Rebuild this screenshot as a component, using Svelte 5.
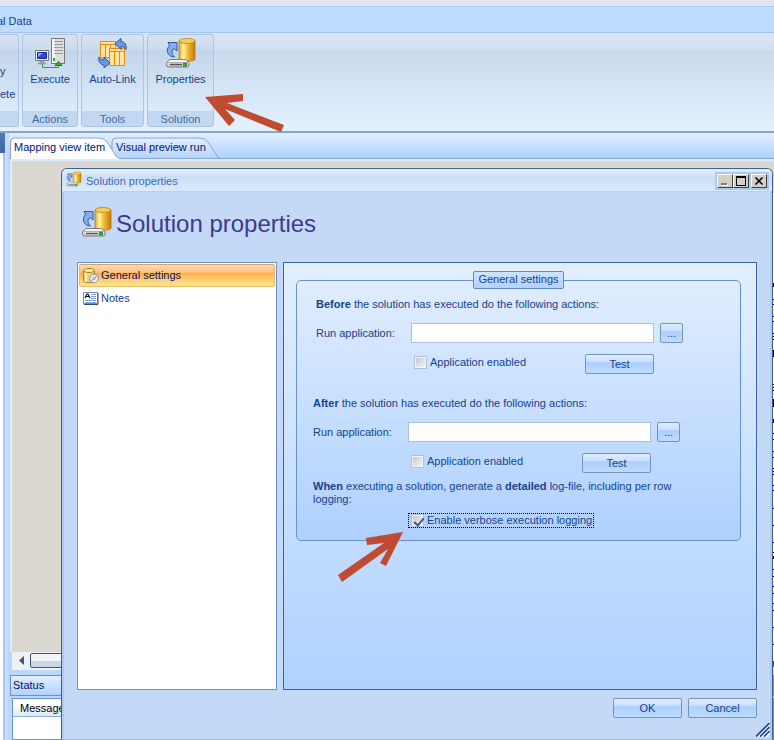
<script>
  const groups = [
    { id: 'before', word: 'Before', gutter: 19 },
    { id: 'after', word: 'After', gutter: 16 }
  ];
  // right-hand text column peeking out from behind the dialog: [y, height]
  const ticks = [
    [122, 4], [138, 1], [143, 1], [155, 1], [160, 1], [172, 1], [175, 1], [178, 1], [189, 7],
    [223, 1], [226, 1], [229, 1], [238, 8], [258, 4], [272, 1], [278, 1], [290, 1], [296, 1],
    [307, 1], [310, 1], [313, 1], [324, 1], [329, 1], [347, 1], [364, 1], [381, 1], [391, 1],
    [395, 3], [408, 1], [415, 1], [425, 1], [432, 1], [442, 1], [449, 1], [466, 1], [483, 1]
  ];
  let values = $state({ before: '', after: '' });
  let enabled = $state({ before: false, after: false });
  let verbose = $state(true);
</script>

{#snippet database(size)}
  <svg class="icon" width={size} height={size} viewBox="0 0 32 32" aria-hidden="true">
    <defs>
      <linearGradient id="gold"><stop offset="0" stop-color="#dca526" /><stop offset=".28" stop-color="#fff3ae" /><stop offset=".55" stop-color="#f2bc35" /><stop offset="1" stop-color="#c47a05" /></linearGradient>
      <linearGradient id="drive" x2="0" y2="1"><stop offset="0" stop-color="#fff" /><stop offset="1" stop-color="#c4c4c4" /></linearGradient>
    </defs>
    <path d="M14 4v18c0 3 16 3 16 0V4z" fill="url(#gold)" stroke="#b57912" stroke-width=".8" />
    <ellipse cx="22" cy="4" rx="8" ry="2.500" fill="#f4cd58" stroke="#b98318" stroke-width=".8" />
    <path d="M5 22.500l-3.500 3v2.500q0 2 2 2h18.500q2 0 2-2v-2.500l-3.500-3z" fill="url(#drive)" stroke="#7d7d7d" />
    <path d="M2 25.500h21" stroke="#b5b5b5" />
    <path d="M5 27.500h12" stroke="#555" stroke-width="1.300" />
    <path d="M18.500 26h3v3h-3z" fill="#25b825" stroke="#17681a" stroke-width=".6" />
    <path d="M9.500 20C3 20 0 13 4.500 8.500L3 5.500h9v8.500l-3-2.500C6 13 6.500 17 9.500 20z" fill="#86aeec" stroke="#2a57ab" stroke-width="1" />
  </svg>
{/snippet}

<div class="app">
  <div class="caption"></div>
  <nav class="menubar"><a href="#data">al Data</a></nav>

  <div class="ribbon">
    <section class="group cut">
      <div class="items"><button class="small">y</button><button class="small">ete</button></div>
      <footer></footer>
    </section>
    <section class="group actions">
      <button class="tool">
        <svg class="icon" width="32" height="32" viewBox="0 0 32 32" aria-hidden="true">
          <path d="M17.500 1.500h13v25h-13z" fill="#dedede" stroke="#777" />
          <path d="M18 2h3v24h-3z" fill="#f8f8f8" />
          <path d="M20 4.500h9M20 7.500h9M20 10.500h9M20 13.500h9M20 16.500h9" stroke="#999" />
          <path d="M19 21h2v3h-2z" fill="#27b327" />
          <path d="M1.500 13.500h13v10h-13z" fill="#f2f2f2" stroke="#777" />
          <path d="M3.500 15.500h9v6h-9z" fill="#2d43e8" stroke="#1524a0" />
          <path d="M4 16h5l-5 4z" fill="#8ba2ff" />
          <path d="M6 24h4v2H6zM4 26h8v1H4z" fill="#b0b0b0" stroke="#888" stroke-width=".5" />
          <path d="M8.500 27v3.500h16v-3" fill="none" stroke="#3f963a" />
          <path d="M21 28.500l3.500-4 3.500 4z" fill="#42aa36" stroke="#28751f" />
        </svg>
        <span>Execute</span>
      </button>
      <footer>Actions</footer>
    </section>
    <section class="group tools">
      <button class="tool">
        <svg class="icon" width="32" height="32" viewBox="0 0 32 32" aria-hidden="true">
          <path d="M3.500 4.500h15v16h-15z" fill="#ffe5a0" stroke="#e48b12" />
          <path d="M4 7.500h14M8.500 8v12M13.500 8v12" stroke="#e48b12" />
          <path d="M12.500 11.500h15v17h-15z" fill="#ffe5a0" stroke="#e48b12" />
          <path d="M13 14.500h14M17.500 15v13M22.500 15v13" stroke="#e48b12" />
          <path d="M18 6.500L24 1.500v3c4 0 6 4 5 8-1-2-3-3-5-3v3z" fill="#6e98dd" stroke="#2b57a6" />
          <path d="M13 26l-6 5v-3c-4 0-6-4-5-8 1 2 3 3 5 3v-3z" fill="#6e98dd" stroke="#2b57a6" />
        </svg>
        <span>Auto-Link</span>
      </button>
      <footer>Tools</footer>
    </section>
    <section class="group solution">
      <button class="tool">{@render database(32)}<span>Properties</span></button>
      <footer>Solution</footer>
    </section>
  </div>

  <div class="workspace">
    <aside class="side"><div class="side-head"></div></aside>
    <main class="pane">
      <div class="tabs">
        <svg class="tab-shape" width="220" height="26" viewBox="0 0 220 26" aria-hidden="true">
          <defs><linearGradient id="tab" x2="0" y2="1"><stop offset="0" stop-color="#e4efff" /><stop offset="1" stop-color="#b6d4fd" /></linearGradient></defs>
          <path d="M102 25V9q0-4 4-4h84q5 0 8 4l9 14q1 2 3 2" fill="url(#tab)" stroke="#8aa5d2" />
          <path d="M1 26V9q0-4 4-4h84q5 0 8 4l9 14q1 2 3 2v1z" fill="#fff" />
          <path d="M.5 25V9q0-4 4-4H89q5 0 8 4l9 14q1 2 3 2" fill="none" stroke="#8aa5d2" />
        </svg>
        <button class="tab first">Mapping view item</button>
        <button class="tab">Visual preview run</button>
      </div>
      <div class="canvas">
        <svg class="behind" width="2" height="500" viewBox="0 0 2 500" aria-hidden="true">
          <path d="M0 32h2v468H0z" fill="#fff" />
          {#each ticks as [y, h]}<rect x="0" y={y} width="2" height={h} fill="#000" />{/each}
        </svg>
      </div>
      <div class="scroll">
        <svg width="18" height="17" viewBox="0 0 18 17" aria-hidden="true"><path d="M12 4v9L7 8.500z" fill="#3f557f" /></svg>
        <div class="thumb"></div>
      </div>
      <div class="status">Status</div>
      <div class="messages"><div class="column">Message</div></div>
    </main>
  </div>

  <div class="dialog" role="dialog" aria-labelledby="dialog-title">
    <header class="titlebar">
      {@render database(16)}
      <span class="name">Solution properties</span>
      <div class="controls">
        <button aria-label="Minimize"><svg width="10" height="10" viewBox="0 0 10 10"><path d="M2 8h6v2H2z" fill="#fff" /><path d="M1 7h6v2H1z" fill="#808080" /></svg></button>
        <button aria-label="Maximize"><svg width="10" height="10" viewBox="0 0 10 10"><path d="M0 0h10v10H0zM1 2v7h8V2z" fill="#000" fill-rule="evenodd" /></svg></button>
        <button class="close" aria-label="Close"><svg width="10" height="10" viewBox="0 0 10 10"><path d="M1.500 1.500l7 7M8.500 1.500l-7 7" stroke="#000" stroke-width="1.600" /></svg></button>
      </div>
    </header>

    <div class="heading">{@render database(32)}<h1 id="dialog-title">Solution properties</h1></div>

    <div class="panes">
      <div class="list">
        <button class="entry selected">
          <svg class="icon" width="16" height="16" viewBox="0 0 16 16" aria-hidden="true">
            <path d="M.5 2.500v10c0 3 11 3 11 0v-10z" fill="#f3d370" stroke="#a88126" />
            <path d="M3 4v10" stroke="#fff4b8" stroke-width="2" />
            <ellipse cx="6" cy="2.500" rx="5.500" ry="2" fill="#ffeaa0" stroke="#a88126" />
            <circle cx="11" cy="10.500" r="4.300" fill="#eef1f5" stroke="#8a8f99" />
            <path d="M11 10.500l3-3M11 10.500l-3 3" stroke="#b9b4d0" stroke-width="1.500" />
            <circle cx="11" cy="10.500" r="1.200" fill="#fff" stroke="#777" stroke-width=".7" />
          </svg>
          General settings
        </button>
        <button class="entry">
          <svg class="icon" width="16" height="16" viewBox="0 0 16 16" aria-hidden="true">
            <path d="M.5 1.500h14v11H.5z" fill="#fff" stroke="#6d8dbd" />
            <path d="M15 2v11.500H1" fill="none" stroke="#2f4f80" />
            <path d="M2 7l2-4h1l2 4M3 5.500h3" fill="none" stroke="#111" stroke-width="1.200" />
            <path d="M8 3.500h5M8 5.500h5M8 7.500h5M2 9.500h11M2 11.500h11" stroke="#81a8df" />
          </svg>
          Notes
        </button>
      </div>

      <div class="settings">
        <fieldset>
          <legend>General settings</legend>
          {#each groups as group}
            <div class="block" style:margin-left="{group.gutter}px" style:margin-right="{76 - group.gutter}px">
              <p><b>{group.word}</b> the solution has executed do the following actions:</p>
              <div class="run">
                <label for="{group.id}-app">Run application:</label>
                <input id="{group.id}-app" type="text" bind:value={values[group.id]} />
                <button class="btn browse">...</button>
              </div>
              <div class="enable">
                <label><input type="checkbox" bind:checked={enabled[group.id]} />Application enabled</label>
                <button class="btn">Test</button>
              </div>
            </div>
          {/each}
          <div class="logging">
            <p><b>When</b> executing a solution, generate a <b>detailed</b> log-file, including per row logging:</p>
            <label class="focus"><input type="checkbox" bind:checked={verbose} />Enable verbose execution logging</label>
          </div>
        </fieldset>
      </div>
    </div>

    <div class="buttons"><button class="btn">OK</button><button class="btn">Cancel</button></div>
    <svg class="grip" width="14" height="14" viewBox="0 0 14 14" aria-hidden="true">
      <path d="M2 14L14 2M6 14l8-8M10 14l4-4" stroke="#fff" stroke-width="1.500" />
      <path d="M0 13.500L13.500 0M4 13.500L13.500 4M8 13.500L13.500 8" stroke="#1d4a93" stroke-width="1.700" />
    </svg>
  </div>

  <svg class="arrow one" width="80" height="40" viewBox="205 93 80 40" aria-hidden="true">
    <path d="M205 97L243 94V101L227 103L284 125L281 132L225 109L235 120L229 126Z" fill="#bf4b32" />
  </svg>
  <svg class="arrow two" width="67" height="52" viewBox="337 531 67 52" aria-hidden="true">
    <path d="M403 532L366 538L367 545L384 543L338 575L342 582L388 549L380 563L386 566Z" fill="#bf4b32" />
  </svg>
</div>

<style>
  :global(body) { margin: 0; }
  .app, .app * { box-sizing: border-box; }
  .app {
    position: relative;
    display: flex;
    flex-direction: column;
    min-height: 100vh;
    overflow: hidden;
    background: #bfdbff;
    color: #15428b;
    font: 11px/13px "Liberation Sans", Arial, sans-serif;
  }
  button, input { font: inherit; color: inherit; margin: 0; }
  button { padding: 0; border: 0; background: none; white-space: nowrap; }
  p { margin: 0; }
  .icon { display: block; flex: none; }

  .caption { height: 6px; background: #dfe4ee; }
  .menubar {
    display: flex;
    align-items: center;
    height: 26px;
    padding-top: 3px;
    border-top: 1px solid #a9cbf5;
    background: #bfdbff;
  }
  .menubar a { color: inherit; text-decoration: none; margin-left: -3px; }

  .ribbon {
    display: flex;
    gap: 3px;
    height: 101px;
    padding: 1px 0 4px;
    border-top: 1px solid #a3c3ec;
    border-bottom: 2px solid #86a5cd;
    background: linear-gradient(#dae6f4 0, #d2e0f1 16px, #c8daee 17px, #e3f1ff 96px);
  }
  .group {
    display: flex;
    flex-direction: column;
    border: 1px solid #aac4e2;
    border-radius: 3px;
    background: linear-gradient(#d5e2f1 0, #cddcee 14px, #c2d5eb 15px, #dcebfb 76px);
    overflow: hidden;
  }
  .group footer {
    height: 15px;
    background: #c1d8f0;
    color: #3e6aaa;
    line-height: 16px;
    text-align: center;
  }
  .cut { width: 19px; border-left: 0; border-top-left-radius: 0; border-bottom-left-radius: 0; }
  .actions { width: 56px; }
  .tools { width: 63px; }
  .solution { width: 67px; }
  .items { flex: 1; display: flex; flex-direction: column; align-items: flex-start; gap: 9px; padding-top: 29px; }
  .small { height: 14px; }
  .tool { flex: 1; display: flex; flex-direction: column; align-items: center; gap: 4px; padding-top: 2px; }

  .workspace { flex: 1; display: flex; gap: 4px; background: linear-gradient(90deg, #e3efff 0, #bcd7fc 9px); }
  .side { width: 5px; background: #fff; border-right: 2px solid #a8c6ef; }
  .side-head { height: 20px; width: 5px; background: linear-gradient(#4f7bb8, #3c66a5); }
  .pane { flex: 1; min-width: 0; display: flex; flex-direction: column; }
  .tabs {
    position: relative;
    display: flex;
    height: 26px;
    padding: 3px 0 0 5px;
    gap: 11px;
    border-bottom: 1px solid #8aa5d2;
    background: linear-gradient(#e3efff, #aed2ff);
  }
  .tab-shape { position: absolute; left: 1px; top: 0; }
  .tab { position: relative; color: #00156e; }
  .canvas {
    flex: 1;
    position: relative;
    margin-left: 1px;
    border: solid #dcebff;
    border-width: 2px 0 0 2px;
    background: #dbd8d1;
  }
  .behind { position: absolute; right: 0; top: 0; }
  .scroll { display: flex; height: 18px; margin-left: 3px; background: #eef1f6; }
  .thumb { flex: 1; height: 15px; margin-top: 1px; border: 1px solid #3e5680; border-radius: 2px; background: linear-gradient(#f2f5fa 50%, #ccd6e6 50%); }
  .status {
    height: 21px;
    margin: 5px 0 2px 1px;
    padding: 3px 2px;
    border: 1px solid #6693cf;
    background: linear-gradient(#e3efff, #b1d1fc);
    color: #00156e;
  }
  .messages { height: 42px; margin-left: 3px; border: 1px solid #6693cf; background: #fff; }
  .column { height: 18px; padding: 3px 7px; border-bottom: 1px solid #8faede; background: linear-gradient(#fff 40%, #d9e8fb); color: #000; }

  .dialog {
    position: absolute;
    left: 61px;
    right: 1px;
    top: 168px;
    bottom: 0;
    display: flex;
    flex-direction: column;
    border: 1px solid #3b5f94;
    border-bottom-color: #a4bedf;
    border-radius: 6px 6px 0 0;
    background: #c3d9f7;
    box-shadow: inset 2px 0 #b1cbee, inset -2px 0 #b1cbee;
  }
  .titlebar {
    display: flex;
    align-items: center;
    height: 23px;
    padding: 0 3px 2px 4px;
    border-bottom: 1px solid #cdcdcb;
    border-radius: 5px 5px 0 0;
    background: linear-gradient(#e2eefd 0, #d6e5fa 6px, #cadef7 7px, #dceafd 100%);
    color: #3e6ab0;
  }
  .name { margin: 4px 0 0 4px; flex: 1; }
  .controls { display: flex; padding: 2px; margin-top: 4px; background: #a6caf5; }
  .controls button {
    display: flex;
    align-items: center;
    justify-content: center;
    width: 16px;
    height: 14px;
    border: 1px solid;
    border-color: #fff #404040 #404040 #fff;
    background: #d4d0c8;
  }
  .controls .close { margin-left: 2px; }
  .heading { display: flex; align-items: center; gap: 3px; height: 70px; padding: 0 19px 11px; }
  h1 { margin: 4px 0 0; font-size: 24px; line-height: 28px; font-weight: 400; color: #403a8c; }

  .panes { flex: 1; display: flex; gap: 6px; padding: 0 15px; }
  .list { width: 200px; padding: 1px; border: 1px solid #6e90bf; background: #fff; }
  .entry { display: flex; align-items: center; gap: 2px; width: 100%; height: 23px; padding: 0 3px; border: 1px solid transparent; }
  .selected {
    border-color: #d0a56d #e2ba78 #e8c066;
    border-radius: 2px;
    background: linear-gradient(#fbd9ac 0, #fdc37c 35%, #ffae48 38%, #ffe08a 90%);
    color: #00156e;
  }
  .settings {
    flex: 1;
    padding: 8px 15px 148px 12px;
    border: 1px solid #3b63a3;
    background: linear-gradient(#e3efff, #afd2ff);
  }
  fieldset {
    min-width: 0;
    margin: 0;
    padding: 0 0 12px;
    border: 1px solid #6593cf;
    border-radius: 5px;
    background: linear-gradient(#e0edff, #aed0ff);
  }
  legend {
    height: 18px;
    margin: 0 auto;
    padding: 1px 4px;
    border: 1px solid #5f8ac5;
    border-radius: 2px;
    background: linear-gradient(#cfe3ff, #b1d2ff);
  }
  .block { padding-top: 9px; }
  .block + .block { padding-top: 23px; }
  .run { display: flex; align-items: center; height: 20px; margin-top: 12px; }
  .run label { width: 95px; }
  .run input { flex: 1; min-width: 0; height: 20px; padding: 0 3px; border: 1px solid #abc1de; background: #fff; }
  .enable { display: flex; align-items: flex-start; justify-content: space-between; height: 20px; margin: 11px 29px 0 98px; }
  .enable label, .focus { display: flex; align-items: center; gap: 3px; white-space: nowrap; }
  .enable label { padding-top: 2px; }
  .btn {
    width: 69px;
    height: 20px;
    border: 1px solid #7793b9;
    border-radius: 2px;
    background: linear-gradient(#dfecff 0, #c9dfff 40%, #abcfff 42%, #bfdcff 100%);
  }
  .browse { width: 23px; margin-left: 6px; }
  input[type="checkbox"] {
    appearance: none;
    position: relative;
    width: 13px;
    height: 13px;
    padding: 1px;
    border: 1px solid #abc1de;
    background: linear-gradient(135deg, #c3c7cd, #f5f5f5) content-box, #f4f4f4;
  }
  input[type="checkbox"]:checked::after {
    content: "";
    position: absolute;
    left: 4px;
    top: 1px;
    width: 4px;
    height: 8px;
    border: solid #3e5a8b;
    border-width: 0 2px 2px 0;
    transform: rotate(40deg);
  }
  .logging { margin: 7px 55px 0 16px; }
  .focus { width: max-content; height: 15px; margin: 7px 0 0 95px; padding: 0 1px 0 2px; border: 1px dotted #000; }

  .buttons { display: flex; justify-content: flex-end; gap: 6px; padding: 8px 15px 21px; }
  .grip { position: absolute; right: 2px; bottom: 2px; }
  .arrow { position: absolute; pointer-events: none; }
  .one { left: 205px; top: 93px; }
  .two { left: 337px; top: 531px; }
</style>
